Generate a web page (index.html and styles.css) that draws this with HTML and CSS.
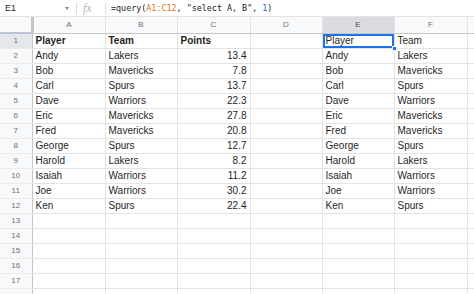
FILE: index.html
```html
<!DOCTYPE html>
<html lang="en">
<head>
    <meta charset="UTF-8">
    <title>Sheet - query</title>
    <link rel="stylesheet" href="styles.css">
</head>
<body>
    <div class="formula-bar">
        <div class="name-box">
            <span class="cell-ref">E1</span>
            <span class="caret"></span>
        </div>
        <div class="fx">fx</div>
        <div class="formula">=query(<span class="ref">A1:C12</span>, "select A, B", <span class="num">1</span>)</div>
    </div>

    <table class="sheet">
        <colgroup>
            <col class="c-head">
            <col class="c-a">
            <col class="c-b">
            <col class="c-c">
            <col class="c-d">
            <col class="c-e">
            <col class="c-f">
            <col class="c-g">
        </colgroup>
        <thead>
            <tr>
                <th class="corner"></th>
                <th>A</th>
                <th>B</th>
                <th>C</th>
                <th>D</th>
                <th class="active">E</th>
                <th>F</th>
                <th></th>
            </tr>
        </thead>
        <tbody>
            <tr>
                <td class="row-num active">1</td>
                <td class="bold">Player</td>
                <td class="bold">Team</td>
                <td class="bold">Points</td>
                <td></td>
                <td class="selected">Player<span class="handle"></span></td>
                <td>Team</td>
                <td></td>
            </tr>
            <tr><td class="row-num">2</td><td>Andy</td><td>Lakers</td><td class="n">13.4</td><td></td><td>Andy</td><td>Lakers</td><td></td></tr>
            <tr><td class="row-num">3</td><td>Bob</td><td>Mavericks</td><td class="n">7.8</td><td></td><td>Bob</td><td>Mavericks</td><td></td></tr>
            <tr><td class="row-num">4</td><td>Carl</td><td>Spurs</td><td class="n">13.7</td><td></td><td>Carl</td><td>Spurs</td><td></td></tr>
            <tr><td class="row-num">5</td><td>Dave</td><td>Warriors</td><td class="n">22.3</td><td></td><td>Dave</td><td>Warriors</td><td></td></tr>
            <tr><td class="row-num">6</td><td>Eric</td><td>Mavericks</td><td class="n">27.8</td><td></td><td>Eric</td><td>Mavericks</td><td></td></tr>
            <tr><td class="row-num">7</td><td>Fred</td><td>Mavericks</td><td class="n">20.8</td><td></td><td>Fred</td><td>Mavericks</td><td></td></tr>
            <tr><td class="row-num">8</td><td>George</td><td>Spurs</td><td class="n">12.7</td><td></td><td>George</td><td>Spurs</td><td></td></tr>
            <tr><td class="row-num">9</td><td>Harold</td><td>Lakers</td><td class="n">8.2</td><td></td><td>Harold</td><td>Lakers</td><td></td></tr>
            <tr><td class="row-num">10</td><td>Isaiah</td><td>Warriors</td><td class="n">11.2</td><td></td><td>Isaiah</td><td>Warriors</td><td></td></tr>
            <tr><td class="row-num">11</td><td>Joe</td><td>Warriors</td><td class="n">30.2</td><td></td><td>Joe</td><td>Warriors</td><td></td></tr>
            <tr><td class="row-num">12</td><td>Ken</td><td>Spurs</td><td class="n">22.4</td><td></td><td>Ken</td><td>Spurs</td><td></td></tr>
            <tr><td class="row-num">13</td><td></td><td></td><td></td><td></td><td></td><td></td><td></td></tr>
            <tr><td class="row-num">14</td><td></td><td></td><td></td><td></td><td></td><td></td><td></td></tr>
            <tr><td class="row-num">15</td><td></td><td></td><td></td><td></td><td></td><td></td><td></td></tr>
            <tr><td class="row-num">16</td><td></td><td></td><td></td><td></td><td></td><td></td><td></td></tr>
            <tr><td class="row-num">17</td><td></td><td></td><td></td><td></td><td></td><td></td><td></td></tr>
            <tr><td class="row-num"></td><td></td><td></td><td></td><td></td><td></td><td></td><td></td></tr>
        </tbody>
    </table>
</body>
</html>
```

FILE: styles.css
```css
:root {
    --grid-line: #e2e3e3;
    --header-bg: #f8f9fa;
    --header-line: #c7c7c7;
    --header-text: #6b6f73;
    --text-color: #1f1f1f;
    --select-blue: #1a73e8;
}

* {
    margin: 0;
    padding: 0;
    box-sizing: border-box;
}

body {
    width: 474px;
    height: 294px;
    overflow: hidden;
    background: #ffffff;
    font-family: 'Liberation Sans', Arial, sans-serif;
    color: var(--text-color);
}

/* formula bar */

.formula-bar {
    display: flex;
    align-items: center;
    height: 17px;
    border-bottom: 1px solid var(--grid-line);
}

.name-box {
    display: flex;
    align-items: center;
    justify-content: space-between;
    width: 77px;
    height: 11px;
    padding: 0 7px 0 5px;
    border-right: 1px solid #dadce0;
}

.cell-ref {
    font-size: 9px;
    line-height: 11px;
}

.caret {
    width: 0;
    height: 0;
    border-left: 2px solid transparent;
    border-right: 2px solid transparent;
    border-top: 3px solid #80868b;
}

.fx {
    width: 29px;
    height: 11px;
    padding-left: 6px;
    border-right: 1px solid #dadce0;
    font-family: 'Liberation Serif', serif;
    font-style: italic;
    font-size: 12px;
    line-height: 10px;
    color: #b3b6ba;
}

.formula {
    padding-left: 5px;
    font-family: 'DejaVu Sans Mono', 'Liberation Mono', monospace;
    font-size: 8.4px;
    color: #202124;
    white-space: pre;
}

.formula .ref {
    color: #e8710a;
}

.formula .num {
    color: #1967d2;
}

/* grid */

.sheet {
    table-layout: fixed;
    border-collapse: collapse;
    width: 474px;
    font-size: 10px;
}

.c-head { width: 32px; }
.c-a { width: 73px; }
.c-b { width: 72px; }
.c-c { width: 73px; }
.c-d { width: 72px; }
.c-e { width: 72px; }
.c-f { width: 73px; }
.c-g { width: 7px; }

.sheet th {
    height: 16px;
    background: var(--header-bg);
    border-right: 1px solid var(--grid-line);
    border-bottom: 1px solid var(--header-line);
    font-weight: 400;
    font-size: 8px;
    color: var(--header-text);
    text-align: center;
}

.sheet th.corner {
    border-right: 3px solid #c4c7c5;
    border-bottom: 2px solid #b9c4d6;
}

.sheet th.active {
    background: #dadcdf;
    color: #4d5156;
}

.sheet td {
    height: 15px;
    padding: 0 3px;
    border-right: 1px solid var(--grid-line);
    border-bottom: 1px solid var(--grid-line);
    white-space: nowrap;
    overflow: hidden;
    line-height: 13px;
}

.sheet td.row-num {
    background: var(--header-bg);
    border-right: 1px solid var(--header-line);
    border-bottom: 1px solid #ebebeb;
    font-size: 8px;
    color: var(--header-text);
    text-align: center;
}

.sheet td.row-num.active {
    background: #e4e7ec;
}

.sheet td.bold {
    font-weight: 700;
}

.sheet td.n {
    text-align: right;
}

.sheet td.selected {
    position: relative;
    overflow: visible;
    box-shadow: inset 0 0 0 2px var(--select-blue);
}

.handle {
    position: absolute;
    right: -3px;
    bottom: -3px;
    width: 5px;
    height: 5px;
    background: var(--select-blue);
    border: 1px solid #ffffff;
}
```
